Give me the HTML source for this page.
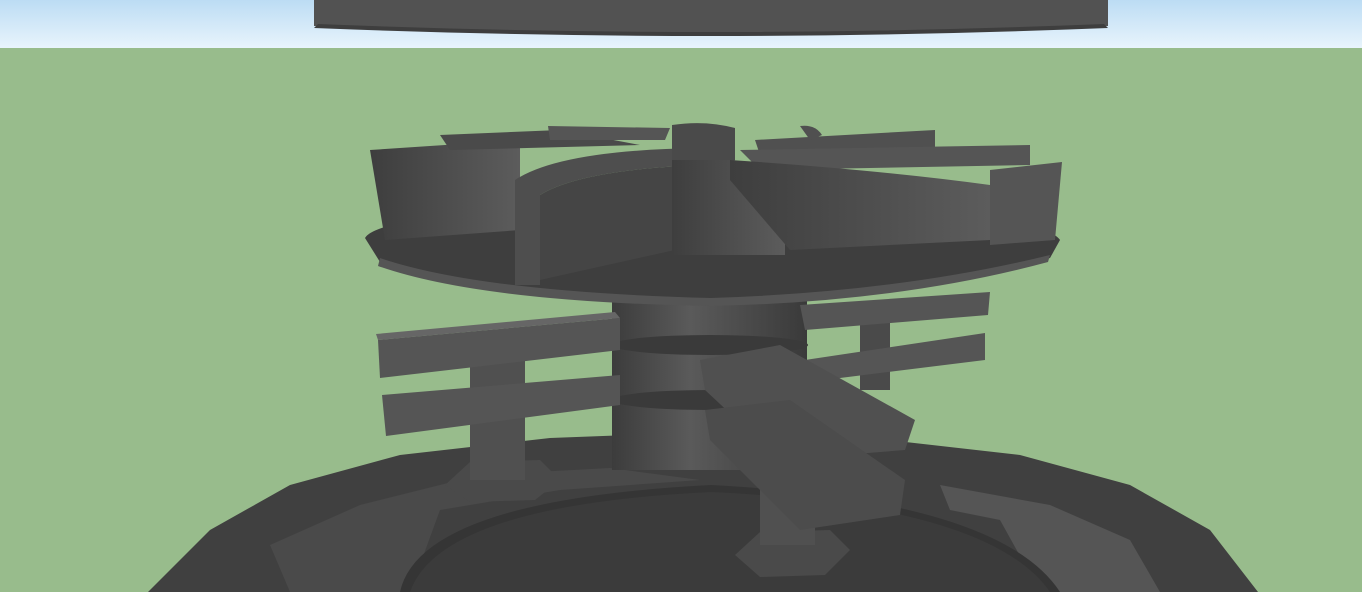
<!DOCTYPE html>
<html><head><meta charset="utf-8"><style>html,body{margin:0;padding:0;width:1362px;height:592px;overflow:hidden;background:#98bc8c}</style></head>
<body>
<svg width="1362" height="592" viewBox="0 0 1362 592" xmlns="http://www.w3.org/2000/svg">
<defs>
<linearGradient id="sky" x1="0" y1="0" x2="0" y2="1"><stop offset="0" stop-color="#bcdcf4"/><stop offset="1" stop-color="#e8f4fc"/></linearGradient>
<linearGradient id="cyl" x1="0" y1="0" x2="1" y2="0"><stop offset="0" stop-color="#3c3c3c"/><stop offset="0.4" stop-color="#5a5a5a"/><stop offset="1" stop-color="#3a3a3a"/></linearGradient>
<linearGradient id="blade" x1="0" y1="0" x2="1" y2="0"><stop offset="0" stop-color="#3e3e3e"/><stop offset="1" stop-color="#5c5c5c"/></linearGradient>
</defs>
<rect x="0" y="0" width="1362" height="48" fill="url(#sky)"/>
<rect x="0" y="48" width="1362" height="544" fill="#98bc8c"/>
<!-- top disc -->
<path d="M314 0 H1108 V26 Q711 42 314 26 Z" fill="#525252"/>
<path d="M318 24 Q711 40 1104 24 L1108 28 Q711 44 314 28Z" fill="#3e3e3e"/>
<!-- bottom dome -->
<path d="M148 592 L210 530 L290 485 L400 455 L550 438 L711 432 L870 438 L1020 455 L1130 485 L1210 530 L1258 592 Z" fill="#404040"/>
<path d="M270 545 L360 505 L480 475 L610 468 L700 480 L560 490 L440 510 L410 592 L290 592 Z" fill="#4a4a4a"/>
<path d="M1160 592 L1130 540 L1050 505 L940 485 L950 510 L1000 520 L1040 592 Z" fill="#555"/>
<path d="M400 592 Q420 500 711 485 Q1000 500 1060 592 Z" fill="#353535"/>
<path d="M410 592 Q440 505 711 492 Q990 505 1050 592 Z" fill="#3b3b3b"/>
<!-- feet -->
<path d="M445 485 L470 462 L540 460 L560 480 L535 500 L470 502 Z" fill="#4a4a4a"/>
<path d="M735 555 L760 532 L830 530 L850 550 L825 575 L760 577 Z" fill="#4a4a4a"/>
<rect x="470" y="360" width="55" height="120" fill="#505050"/>
<rect x="760" y="430" width="55" height="115" fill="#505050"/>
<rect x="860" y="310" width="30" height="80" fill="#4a4a4a"/>
<!-- central hub -->
<rect x="612" y="300" width="195" height="170" fill="url(#cyl)"/>
<ellipse cx="710" cy="345" rx="98" ry="10" fill="#3a3a3a"/>
<ellipse cx="710" cy="400" rx="98" ry="10" fill="#3a3a3a"/>
<!-- left bars -->
<path d="M378 340 L620 318 L620 350 L380 378 Z" fill="#555"/>
<path d="M378 340 L620 318 L615 312 L376 334 Z" fill="#666"/>
<path d="M382 395 L620 375 L620 405 L386 436 Z" fill="#555"/>
<!-- right bars -->
<path d="M800 305 L990 292 L988 315 L805 330 Z" fill="#555"/>
<path d="M805 360 L985 333 L985 360 L808 382 Z" fill="#555"/>
<path d="M700 360 L780 345 L915 420 L905 450 L780 460 L705 390 Z" fill="#505050"/>
<path d="M705 410 L790 400 L905 480 L900 515 L800 530 L710 440 Z" fill="#4c4c4c"/>
<!-- impeller base plate -->
<path d="M365 238 Q380 210 711 195 Q1040 210 1060 240 L1050 258 Q900 300 711 305 Q480 300 380 262 Z" fill="#3e3e3e"/>
<path d="M380 258 Q480 292 711 298 Q900 292 1050 255 L1048 262 Q900 302 711 306 Q480 302 378 266Z" fill="#555"/>
<!-- blades -->
<path d="M370 150 L520 140 L520 230 L385 240 Z" fill="url(#blade)"/>
<path d="M515 180 Q560 150 700 148 L700 165 Q580 170 540 195 L540 285 L515 285 Z" fill="#4e4e4e"/>
<path d="M540 195 Q580 170 700 165 L720 240 L540 280 Z" fill="#454545"/>
<path d="M672 160 Q690 150 720 150 L785 195 L785 255 L672 255 Z" fill="url(#blade)"/>
<path d="M672 125 Q705 120 735 128 L735 160 L672 160 Z" fill="#4a4a4a"/>
<path d="M440 135 L560 130 L640 145 L450 150 Z" fill="#4a4a4a"/>
<path d="M548 126 L670 128 L665 140 L550 140 Z" fill="#555"/>
<path d="M755 140 L935 130 L935 150 L760 155 Z" fill="#505050"/>
<path d="M740 150 L1030 145 L1030 165 L760 170 Z" fill="#555"/>
<path d="M730 160 Q880 170 990 185 L990 240 L790 250 L730 180 Z" fill="url(#blade)"/>
<path d="M990 170 L1062 162 L1055 240 L990 245 Z" fill="#555"/>
<path d="M800 126 Q815 124 822 135 L810 140 Z" fill="#505050"/>
</svg>
</body></html>
